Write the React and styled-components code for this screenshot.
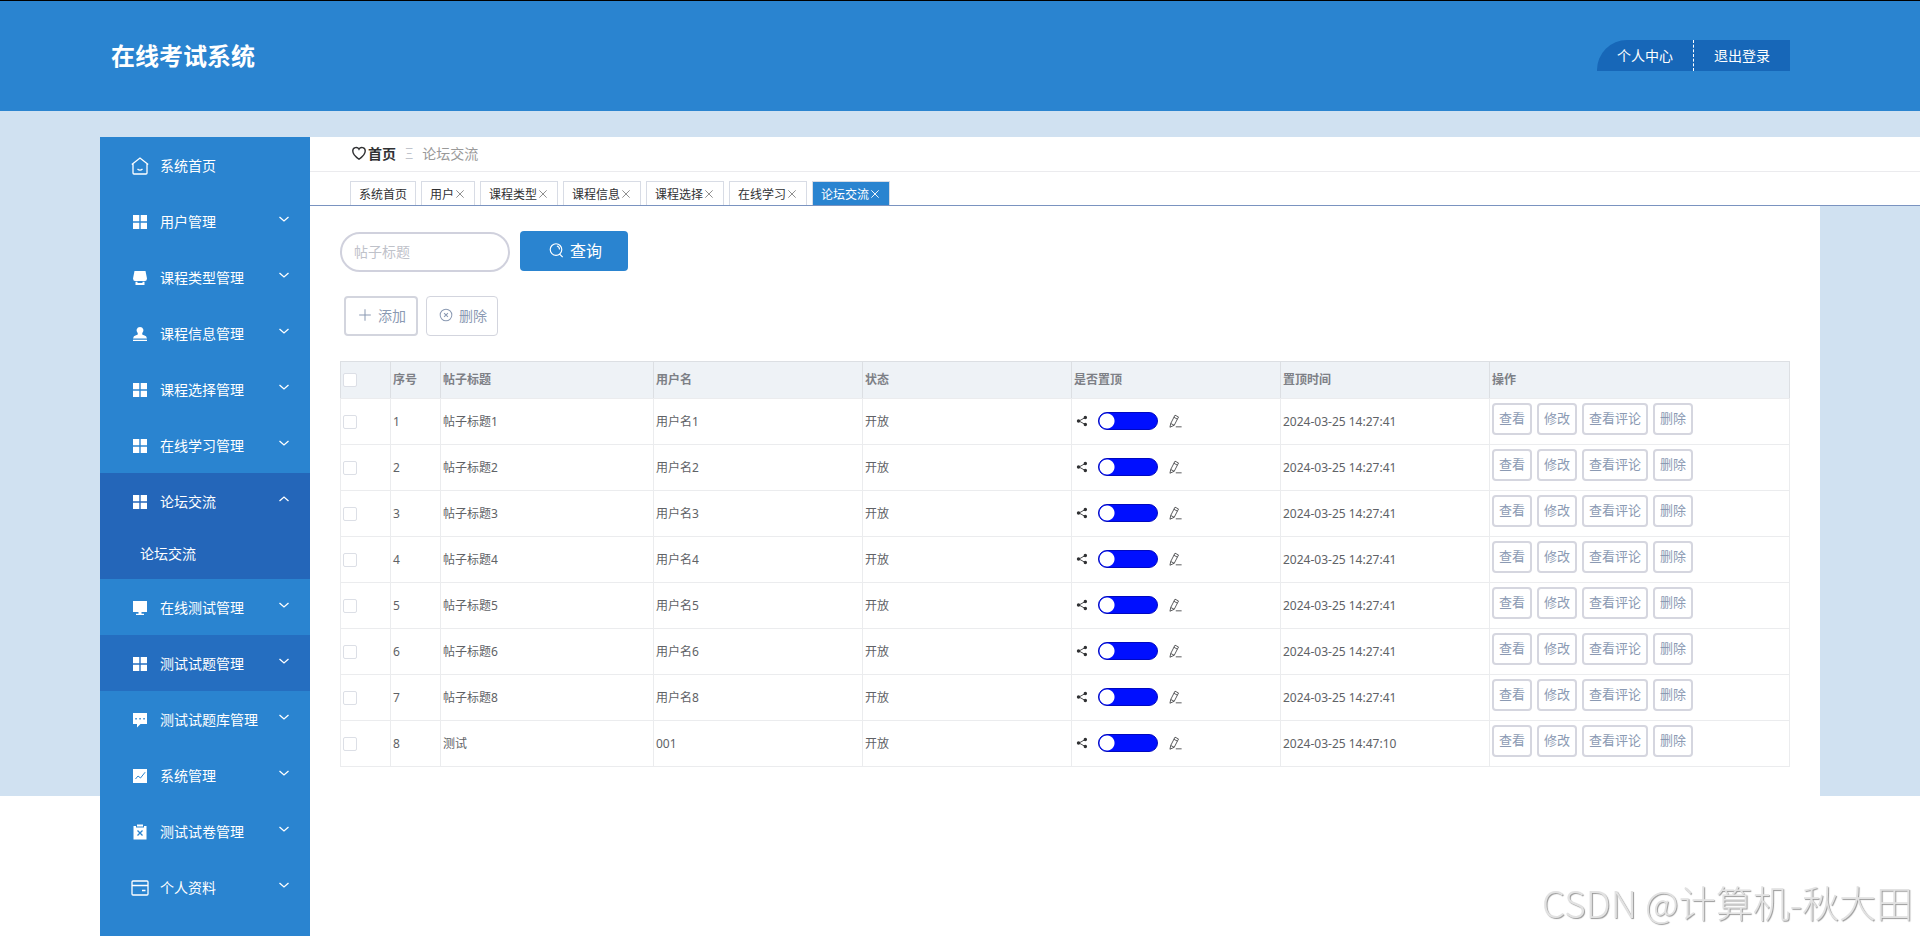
import { Fragment } from "react";
import styled, { createGlobalStyle } from "styled-components";

const icons = {
    home: <path d="M.8 7.500 9 1l8.200 6.500M2 7v9a1 1 0 0 0 1 1h12a1 1 0 0 0 1-1V7M6.500 12q2.500 2.200 5 0" />,
    grid: <path fill="currentColor" stroke="none" d="M2 2h6.300v6.300H2zM9.700 2H16v6.300H9.700zM2 9.700h6.300V16H2zM9.700 9.700H16V16H9.700z" />,
    shop: <path fill="currentColor" stroke="none" d="M3.500 2h11L16 9.500q-.3 3-2.500 2.500h-9Q2.300 12.500 2 9.500zM4.500 12.800h2V14h5v-1.200h2V16h-9z" />,
    stamp: <path fill="currentColor" stroke="none" d="M9 2a3.500 3.500 0 0 1 2.200 6.200Q10.800 10 13 10.300q2.600.3 3 3.200H2q.4-2.900 3-3.200 2.200-.3 1.800-2.100A3.500 3.500 0 0 1 9 2zM2 14.700h14V16H2z" />,
    monitor: <path fill="currentColor" stroke="none" d="M2 2h14v11h-5.500v1.700H13V16H5v-1.300h2.500V13H2z" />,
    chat: <path fill="currentColor" stroke="none" fillRule="evenodd" d="M2 2h14v11H9.500L6 16.500V13H2zM4.300 7v1.500h1.500V7zm4 0v1.500h1.500V7zm4 0v1.500h1.500V7z" />,
    chart: (
        <>
            <path fill="currentColor" stroke="none" d="M2 2h14v14H2z" />
            <path stroke="#2a84d0" strokeWidth="1" d="m4.500 12 2.500-3 2.500 2 4-5M13.500 5.500h.8" />
        </>
    ),
    clipboard: (
        <>
            <path fill="currentColor" stroke="none" d="M2.500 3H5v1.500h8V3h2.500v13.500h-13zM6 1.500h6v2H6z" />
            <path stroke="#2a84d0" d="m6.500 7.500 5 5m0-5-5 5" />
        </>
    ),
    card: <path d="M2 2h14a1 1 0 0 1 1 1v12a1 1 0 0 1-1 1H2a1 1 0 0 1-1-1V3a1 1 0 0 1 1-1zM1 6.500h16M11 11.500h3.500" />,
    down: <path d="m4.500 7 4.500 4 4.500-4" />,
    up: <path d="m4.500 11 4.500-4 4.500 4" />,
    heart: <path d="M9 16Q2 11 2 6.700A3.700 3.700 0 0 1 9 4.800a3.700 3.700 0 0 1 7 1.900Q16 11 9 16z" />,
    close: <path d="m3.500 3.500 11 11M14.500 3.500l-11 11" />,
    search: <path d="M9 2a6.500 6.500 0 1 0 0 13A6.500 6.500 0 0 0 9 2zM10 4.500q3 .8 3 4M13 13.500l3.500 3.500" />,
    plus: <path d="M9 1.500v15M1.500 9h15" />,
    remove: <path d="M9 1.500a7.500 7.500 0 1 0 0 15 7.500 7.500 0 0 0 0-15zM6.500 6.500l5 5m0-5-5 5" />,
    share: (
        <>
            <path d="m13.500 4-9 5 9 5" />
            <path fill="currentColor" stroke="none" d="M14 1.200a2.600 2.600 0 1 1 0 5.200 2.600 2.600 0 0 1 0-5.200zM3.800 6.400a2.600 2.600 0 1 1 0 5.200 2.600 2.600 0 0 1 0-5.200zM14 11.600a2.600 2.600 0 1 1 0 5.200 2.600 2.600 0 0 1 0-5.200z" />
        </>
    ),
    edit: <path d="m9 1.500 4.500 2.300-5.500 10.700-5.500 2.500L3.500 12.200zM7.500 4.200 12 6.500M3.500 12.200l4.500 2.300M10 16.500h7.500" />,
};

const Icon = ({ name, size = 18, weight = 1.3 }) => (
    <Svg $size={size} viewBox="0 0 18 18" strokeWidth={weight} aria-hidden="true">
        {icons[name]}
    </Svg>
);

const menu = [
    { name: "系统首页", icon: "home" },
    { name: "用户管理", icon: "grid", arrow: "down" },
    { name: "课程类型管理", icon: "shop", arrow: "down" },
    { name: "课程信息管理", icon: "stamp", arrow: "down" },
    { name: "课程选择管理", icon: "grid", arrow: "down" },
    { name: "在线学习管理", icon: "grid", arrow: "down" },
    { name: "论坛交流", icon: "grid", arrow: "up", bg: "#2466b9", children: ["论坛交流"] },
    { name: "在线测试管理", icon: "monitor", arrow: "down" },
    { name: "测试试题管理", icon: "grid", arrow: "down", bg: "#256ec0" },
    { name: "测试试题库管理", icon: "chat", arrow: "down" },
    { name: "系统管理", icon: "chart", arrow: "down" },
    { name: "测试试卷管理", icon: "clipboard", arrow: "down" },
    { name: "个人资料", icon: "card", arrow: "down" },
];

const tabs = ["系统首页", "用户", "课程类型", "课程信息", "课程选择", "在线学习", "论坛交流"];

const columns = ["序号", "帖子标题", "用户名", "状态", "是否置顶", "置顶时间", "操作"];

const rows = [
    { title: "帖子标题1", user: "用户名1", time: "2024-03-25 14:27:41" },
    { title: "帖子标题2", user: "用户名2", time: "2024-03-25 14:27:41" },
    { title: "帖子标题3", user: "用户名3", time: "2024-03-25 14:27:41" },
    { title: "帖子标题4", user: "用户名4", time: "2024-03-25 14:27:41" },
    { title: "帖子标题5", user: "用户名5", time: "2024-03-25 14:27:41" },
    { title: "帖子标题6", user: "用户名6", time: "2024-03-25 14:27:41" },
    { title: "帖子标题8", user: "用户名8", time: "2024-03-25 14:27:41" },
    { title: "测试", user: "001", time: "2024-03-25 14:47:10" },
];

const actions = ["查看", "修改", "查看评论", "删除"];

const Sidebar = () => (
    <Side>
        {menu.map((item) => (
            <Fragment key={item.name}>
                <MenuItem type="button" $bg={item.bg}>
                    <Icon name={item.icon} />
                    <span>{item.name}</span>
                    {item.arrow && <Icon name={item.arrow} />}
                </MenuItem>
                {item.children?.map((child) => (
                    <SubItem href="#" key={child}>{child}</SubItem>
                ))}
            </Fragment>
        ))}
    </Side>
);

const PostTable = () => (
    <Table>
        <colgroup>
            <col width="50" />
            <col width="50" />
            <col width="213" />
            <col width="209" />
            <col width="209" />
            <col width="209" />
            <col width="209" />
            <col />
        </colgroup>
        <thead>
            <tr>
                <th><Checkbox aria-label="全选" /></th>
                {columns.map((name) => <th key={name}>{name}</th>)}
            </tr>
        </thead>
        <tbody>
            {rows.map((row, index) => (
                <tr key={row.title}>
                    <td><Checkbox aria-label={row.title} /></td>
                    <td>{index + 1}</td>
                    <td>{row.title}</td>
                    <td>{row.user}</td>
                    <td>开放</td>
                    <td>
                        <TopCell>
                            <Icon name="share" size={12} />
                            <Switch aria-label={`置顶 ${row.title}`} />
                            <Icon name="edit" size={14} weight={1} />
                        </TopCell>
                    </td>
                    <td>{row.time}</td>
                    <td>
                        <Actions>
                            {actions.map((name) => (
                                <ActionButton type="button" key={name}>{name}</ActionButton>
                            ))}
                        </Actions>
                    </td>
                </tr>
            ))}
        </tbody>
    </Table>
);

const App = () => {
    return (
        <>
            <GlobalStyle />
            <Header>
                <h1>在线考试系统</h1>
                <UserLinks>
                    <a href="#">个人中心</a>
                    <a href="#">退出登录</a>
                </UserLinks>
            </Header>
            <Body>
                <Sidebar />
                <Main>
                    <Breadcrumb>
                        <a href="#"><Icon name="heart" size={16} weight={1.6} />首页</a>
                        <i>Ξ</i>
                        <span>论坛交流</span>
                    </Breadcrumb>
                    <Tabs>
                        {tabs.map((name, index) => (
                            <Tab type="button" key={name} $active={name === "论坛交流"}>
                                {name}
                                {index > 0 && <Icon name="close" size={12} weight={1.4} />}
                            </Tab>
                        ))}
                    </Tabs>
                    <Content>
                        <SearchRow>
                            <SearchInput aria-label="帖子标题" placeholder="帖子标题" />
                            <QueryButton type="button"><Icon name="search" size={16} />查询</QueryButton>
                        </SearchRow>
                        <ToolRow>
                            <ToolButton type="button" $border={2}><Icon name="plus" size={14} />添加</ToolButton>
                            <ToolButton type="button" $border={1}><Icon name="remove" size={14} />删除</ToolButton>
                        </ToolRow>
                        <PostTable />
                    </Content>
                </Main>
            </Body>
            <Watermark>CSDN @计算机-秋大田</Watermark>
        </>
    )
}

export default App;

const GlobalStyle = createGlobalStyle`
    * {
        box-sizing: border-box;
    }

    html {
        overflow: hidden;
    }

    body {
        margin: 0;
        background: #fff;
        font-family: "Noto Sans CJK SC", sans-serif;
        font-size: 14px;
    }

    a {
        color: inherit;
        text-decoration: none;
    }

    button, input {
        margin: 0;
        font-family: inherit;
    }
`

const Svg = styled.svg`
    flex: none;
    width: ${(props) => props.$size}px;
    height: ${(props) => props.$size}px;
    fill: none;
    stroke: currentColor;
`

const Header = styled.header`
    display: flex;
    justify-content: space-between;
    align-items: center;
    height: 111px;
    padding: 0 130px 2px 111px;
    border-top: 1px solid #000;
    background: #2a84d0;
    color: #fff;

    h1 {
        margin: 0;
        font-size: 24px;
        line-height: 32px;
    }
`

const UserLinks = styled.nav`
    display: flex;
    overflow: hidden;
    border-radius: 30px 0 0 0;
    background: #1767b8;
    line-height: 31px;

    a {
        padding: 0 20px;
    }

    a + a {
        border-left: 1px dashed #fff;
    }
`

const Body = styled.div`
    display: flex;
    min-height: calc(100vh - 111px);
    padding: 26px 0 0 100px;
    background: linear-gradient(#d0e1f1, #d0e1f1) no-repeat;
    background-size: 100% 685px;
`

const Side = styled.nav`
    flex: none;
    width: 210px;
    background: #2a84d0;
    color: #fff;
`

const MenuItem = styled.button`
    display: flex;
    align-items: center;
    gap: 11px;
    width: 100%;
    height: 56px;
    padding: 2px 17px 0 31px;
    border: 0;
    background: ${(props) => props.$bg || "transparent"};
    color: #fff;
    font-size: 14px;
    text-align: left;

    span {
        flex: 1;
        padding-bottom: 2px;
    }

    svg:last-child {
        margin-bottom: 6px;
    }
`

const SubItem = styled.a`
    display: block;
    padding: 0 0 2px 40px;
    background: #2466b9;
    line-height: 48px;
`

const Main = styled.main`
    flex: 1;
    min-width: 0;
    background: linear-gradient(#fff, #fff) no-repeat;
    background-size: calc(100% - 100px) 100%;
`

const Breadcrumb = styled.div`
    display: flex;
    align-items: center;
    gap: 9px;
    height: 35px;
    padding: 0 0 2px 41px;
    border-bottom: 1px solid #ebebee;
    background: #fff;
    color: #999;

    a {
        display: flex;
        align-items: center;
        gap: 1px;
        color: #303133;
        font-weight: bold;
    }

    i {
        color: #c0c4cc;
        font-style: normal;
    }
`

const Tabs = styled.div`
    display: flex;
    align-items: flex-end;
    gap: 5px;
    height: 34px;
    padding-left: 40px;
    border-bottom: 1px solid #7a93c0;
    background: #fff;
`

const Tab = styled.button`
    display: flex;
    align-items: center;
    height: 24px;
    padding: 0 8px;
    border: 1px solid #d8dce5;
    border-bottom: 0;
    background: ${(props) => props.$active ? "#2a84d0" : "#fff"};
    color: ${(props) => props.$active ? "#fff" : "#303133"};
    font-size: 12px;

    svg {
        color: ${(props) => props.$active ? "#fff" : "#888"};
    }
`

const Content = styled.section`
    margin-right: 100px;
    padding: 25px 30px;
`

const SearchRow = styled.div`
    display: flex;
    align-items: flex-end;
    gap: 10px;
    height: 41px;
`

const SearchInput = styled.input`
    width: 170px;
    height: 40px;
    padding: 0 12px 2px;
    border: 2px solid #d0d1dd;
    border-radius: 20px;
    outline: 0;
    font-size: 14px;

    &::placeholder {
        color: #bfc2ca;
    }
`

const QueryButton = styled.button`
    display: flex;
    justify-content: center;
    align-items: center;
    align-self: flex-start;
    gap: 6px;
    width: 108px;
    height: 40px;
    padding: 0 0 2px 2px;
    border: 0;
    border-radius: 4px;
    background: #2a84d0;
    color: #fff;
    font-size: 16px;
`

const ToolRow = styled.div`
    display: flex;
    gap: 8px;
    padding: 24px 4px 25px;
`

const ToolButton = styled.button`
    display: flex;
    align-items: center;
    gap: 6px;
    height: 40px;
    padding: 0 10px 2px 12px;
    border: ${(props) => props.$border}px solid #d3d5de;
    border-radius: 4px;
    background: #fff;
    color: #8b9ab3;
    font-size: 14px;
`

const Table = styled.table`
    width: 100%;
    border-collapse: collapse;
    table-layout: fixed;
    color: #606266;
    font-family: "Noto Sans", "Noto Sans CJK SC", sans-serif;
    font-size: 12px;

    th, td {
        height: 46px;
        padding: 0 2px;
        border: 1px solid #ebecee;
        line-height: 20px;
        text-align: left;
    }

    th {
        height: 37px;
        border-color: #dcdfe3;
        border-bottom-color: #ebecee;
        background: #eef2f6;
        color: #7d8086;
    }
`

const Checkbox = styled.input.attrs({ type: "checkbox" })`
    display: block;
    width: 14px;
    height: 14px;
    border: 1px solid #dcdfe6;
    border-radius: 2px;
    background: #fff;
    appearance: none;
`

const TopCell = styled.div`
    display: flex;
    align-items: center;
    gap: 10px;
    padding: 0 0 1px 2px;
    color: #303133;
`

const Switch = styled.input.attrs({ type: "checkbox", role: "switch" })`
    width: 60px;
    height: 18px;
    border: 1px solid #0008c0;
    border-radius: 9px;
    background: radial-gradient(circle at 8px 8px, #fff 7px, #000fff 8px);
    appearance: none;
`

const Actions = styled.div`
    display: flex;
    gap: 5px;
    padding-bottom: 6px;
`

const ActionButton = styled.button`
    height: 32px;
    padding: 0 5px 2px;
    border: 2px solid #d5d6df;
    border-radius: 4px;
    background: #fff;
    color: #8b9ab3;
    font-size: 13px;
    white-space: nowrap;
`

const Watermark = styled.div`
    position: fixed;
    right: 7px;
    bottom: 6px;
    color: #e2e2e2;
    font-size: 37px;
    font-weight: 300;
    line-height: 56px;
    text-shadow: 1px 1px 1px #999;
`
